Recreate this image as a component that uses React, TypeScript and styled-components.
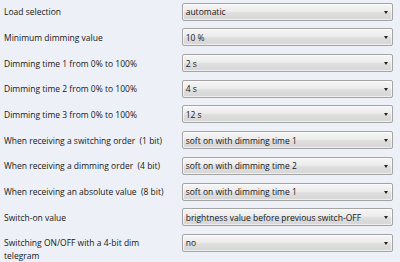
import React from 'react';
import styled, { createGlobalStyle } from 'styled-components';

const GlobalStyle = createGlobalStyle`
  html, body {
    margin: 0;
    padding: 0;
    background: #edf1f7;
  }
`;

const Panel = styled.div`
  width: 400px;
  height: 262px;
  box-sizing: border-box;
  padding: 2.7px 0 0 4px;
  background: #edf1f7;
  font-family: 'Open Sans', 'Noto Sans', sans-serif;
  font-size: 8.5px;
  color: #161616;
  overflow: hidden;
`;

const Row = styled.div`
  display: flex;
  align-items: flex-start;
  height: 25.7px;
`;

const Label = styled.div`
  width: 168px;
  margin-right: 9.7px;
  padding-top: 2.5px;
  line-height: 13px;
  white-space: pre-wrap;
`;

const Select = styled.div`
  position: relative;
  box-sizing: border-box;
  width: 211px;
  height: 18px;
  padding-left: 3px;
  display: flex;
  align-items: center;
  border: 1px solid #a4a4a4;
  border-radius: 2px;
  background: linear-gradient(to bottom, #f6f6f6 0%, #ececec 45%, #dedede 55%, #d6d6d6 100%);
  box-shadow: inset 0 0 0 1px rgba(255, 255, 255, 0.6);
  white-space: nowrap;
`;

const Arrow = styled.span`
  position: absolute;
  right: 4px;
  top: 7px;
  width: 0;
  height: 0;
  border-left: 2.5px solid transparent;
  border-right: 2.5px solid transparent;
  border-top: 3px solid #222;
`;

const rows: [string, string][] = [
  ['Load selection', 'automatic'],
  ['Minimum dimming value', '10 %'],
  ['Dimming time 1 from 0% to 100%', '2 s'],
  ['Dimming time 2 from 0% to 100%', '4 s'],
  ['Dimming time 3 from 0% to 100%', '12 s'],
  ['When receiving a switching order  (1 bit)', 'soft on with dimming time 1'],
  ['When receiving a dimming order  (4 bit)', 'soft on with dimming time 2'],
  ['When receiving an absolute value  (8 bit)', 'soft on with dimming time 1'],
  ['Switch-on value', 'brightness value before previous switch-OFF'],
  ['Switching ON/OFF with a 4-bit dim telegram', 'no'],
];

const App: React.FC = () => (
  <>
    <GlobalStyle />
    <Panel>
      {rows.map(([label, value]) => (
        <Row key={label}>
          <Label>{label}</Label>
          <Select>
            {value}
            <Arrow />
          </Select>
        </Row>
      ))}
    </Panel>
  </>
);

export default App;
